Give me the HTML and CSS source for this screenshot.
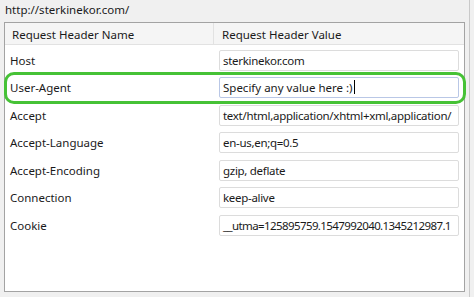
FILE: index.html
```html
<!DOCTYPE html>
<html lang="en">
 <head>
  <meta charset="utf-8">
  <link rel="stylesheet" href="styles.css">
 </head>
 <body>
  <div class="frame">
    <div class="url">http://sterkinekor.com/</div>

    <div class="panel">
      <div class="head">
        <div class="col name">Request Header Name</div>
        <div class="col">Request Header Value</div>
      </div>

      <div class="rows">
        <div class="row">
          <span class="label">Host</span>
          <div class="field">sterkinekor.com</div>
        </div>
        <div class="row marked">
          <span class="label">User-Agent</span>
          <div class="field focus">Specify any value here :)<span class="caret"></span></div>
        </div>
        <div class="row">
          <span class="label">Accept</span>
          <div class="field">text/html,application/xhtml+xml,application/</div>
        </div>
        <div class="row">
          <span class="label">Accept-Language</span>
          <div class="field">en-us,en;q=0.5</div>
        </div>
        <div class="row">
          <span class="label">Accept-Encoding</span>
          <div class="field">gzip, deflate</div>
        </div>
        <div class="row">
          <span class="label">Connection</span>
          <div class="field">keep-alive</div>
        </div>
        <div class="row">
          <span class="label">Cookie</span>
          <div class="field tight">__utma=125895759.1547992040.1345212987.1</div>
        </div>
      </div>
    </div><!-- panel -->
  </div>
 </body>
</html>
```

FILE: styles.css
```css
*{box-sizing:border-box;margin:0;padding:0}
html,body{background:#f0f0f0}
body{font-family:"Noto Sans","Open Sans",sans-serif;font-size:11.5px;color:#1a1a1a}
.frame{width:470px;height:297px;border-right:1px solid #c9c9c9}
.url{height:22px;padding:2px 0 0 5px;line-height:16px}
.panel{margin-left:4px;width:461px;height:270px;border:1px solid #a3a3a3;background:#fff}
.head{display:flex;height:22px;background:#f5f5f5;border-bottom:1px solid #e2e2e2}
.col{padding:1px 0 0 8px;line-height:21px}
.col.name{width:209px;padding-left:7px;border-right:1px solid #e2e2e2}
.rows{padding-top:1.5px}
.row{display:flex;align-items:center;height:27.5px;position:relative}
.label{width:214px;padding-left:5px}
.field{width:240px;height:21px;line-height:19px;padding:0 3px;border:1px solid #dcdcdc;border-radius:2px;white-space:nowrap;overflow:hidden;letter-spacing:-0.3px}
.field.focus{border-color:#b9c7e6;letter-spacing:0}
.field.tight{letter-spacing:-0.6px}
.caret{display:inline-block;width:1px;height:14px;background:#000;vertical-align:-2px;margin-left:1px}
.marked::after{content:"";position:absolute;left:-1px;right:-2px;top:-2px;bottom:-2px;border:3px solid #46c236;border-radius:10px}
```
